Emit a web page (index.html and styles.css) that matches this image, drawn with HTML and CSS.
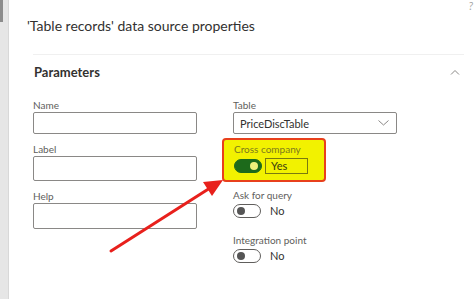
FILE: index.html
```html
<!DOCTYPE html>
<html>
<head>
<meta charset="utf-8">
<link rel="stylesheet" href="styles.css">
</head>
<body>
<div class="page">
  <div class="strip"><div class="strip-top"></div></div>
  <div class="panel">
    <div class="help-mark">?</div>
    <h1 class="title">'Table records' data source properties</h1>
    <div class="divider"></div>
    <div class="section-head">
      <span class="section-title">Parameters</span>
      <svg class="collapse" width="10" height="6" viewBox="0 0 10 6"><path d="M1 5.5 L5 1.5 L9 5.5" fill="none" stroke="#8a8886" stroke-width="1"/></svg>
    </div>
    <div class="grid">
      <div class="col">
        <div class="field">
          <label class="lbl">Name</label>
          <div class="input"></div>
        </div>
        <div class="field gap">
          <label class="lbl">Label</label>
          <div class="input tall"></div>
        </div>
        <div class="field gap">
          <label class="lbl">Help</label>
          <div class="input tall2"></div>
        </div>
      </div>
      <div class="col">
        <div class="field">
          <label class="lbl">Table</label>
          <div class="input select">
            <span class="val">PriceDiscTable</span>
            <svg width="11" height="6" viewBox="0 0 11 6"><path d="M0.5 0.5 L5.5 5 L10.5 0.5" fill="none" stroke="#8a8886" stroke-width="1"/></svg>
          </div>
        </div>
        <div class="field hl">
          <label class="lbl hl-lbl">Cross company</label>
          <div class="toggle-row">
            <span class="toggle on"><span class="knob"></span></span>
            <span class="yes">Yes</span>
          </div>
        </div>
        <div class="field tog">
          <label class="lbl">Ask for query</label>
          <div class="toggle-row">
            <span class="toggle"><span class="knob"></span></span>
            <span class="no">No</span>
          </div>
        </div>
        <div class="field tog tog2">
          <label class="lbl">Integration point</label>
          <div class="toggle-row">
            <span class="toggle"><span class="knob"></span></span>
            <span class="no">No</span>
          </div>
        </div>
      </div>
    </div>
  </div>
  <svg class="arrow" width="474" height="299" viewBox="0 0 474 299">
    <line x1="111" y1="251" x2="210" y2="188" stroke="#e8201c" stroke-width="3" stroke-linecap="round"/>
    <polygon points="223,180 203,182 212,196" fill="#e8201c"/>
  </svg>
</div>
</body>
</html>
```
FILE: styles.css
```css
* { box-sizing: border-box; }
html, body { margin: 0; padding: 0; background: #fff; }
body { font-family: Lato, "Segoe UI", "Noto Sans", sans-serif; color: #323130; }
.page { position: relative; width: 474px; height: 299px; display: flex; overflow: hidden; }
.strip { width: 9px; background: #e6e6e6; border-right: 1px solid #d8d8d8; flex: none; }
.strip-top { width: 3px; height: 22px; background: #8c8c8c; }
.panel { position: relative; flex: 1; padding: 16px 0 0 18px; }
.help-mark { position: absolute; right: 1px; top: 0; font-size: 11px; line-height: 12px; color: #a8a8a8; font-style: italic; }
.title { margin: 0; font-size: 14px; font-weight: 400; line-height: 20px; color: #323130; }
.divider { margin: 18px 0 0 6px; width: 431px; height: 1px; background: #f0f0f0; }
.section-head { display: flex; align-items: center; justify-content: space-between; width: 427px; margin: 9px 0 0 7px; height: 16px; }
.section-title { font-size: 13px; font-weight: 700; color: #323130; }
.collapse { margin-right: 1px; }
.grid { display: grid; grid-template-columns: 164px 164px; column-gap: 36px; margin: 19px 0 0 6px; }
.col { display: flex; flex-direction: column; }
.field { display: flex; flex-direction: column; }
.lbl { font-size: 10px; line-height: 12px; color: #605e5c; height: 13px; }
.input { height: 22px; border: 1px solid #8a8886; border-radius: 2px; background: #fff; }
.input.tall { height: 25px; }
.input.tall2 { height: 26px; }
.gap { margin-top: 9px; }
.select { display: flex; align-items: center; justify-content: space-between; padding: 0 7px 0 6px; }
.val { font-size: 11px; color: #323130; }
.hl { margin: 4px 0 0 -11px; width: 104px; height: 44px; background: #f2f200; border: 2px solid #e8401c; border-radius: 4px; padding: 3px 0 0 10px; }
.hl-lbl { color: #7d7a1e; }
.toggle-row { display: flex; align-items: center; height: 17px; }
.hl .toggle-row { margin-top: 1px; }
.toggle { position: relative; width: 28px; height: 14px; border-radius: 7px; border: 1px solid #605e5c; background: #fff; flex: none; }
.toggle .knob { position: absolute; top: 2px; left: 3px; width: 8px; height: 8px; border-radius: 50%; background: #555; }
.toggle.on { background: #1d6a1b; border-color: #1d6a1b; }
.toggle.on .knob { left: auto; right: 3px; background: #eef07a; }
.yes { margin-left: 3px; width: 43px; height: 16px; border: 1px solid #7a7a10; font-size: 11px; line-height: 14px; padding-left: 5px; color: #3a3a10; }
.no { margin-left: 9px; font-size: 11px; color: #323130; }
.tog { margin-top: 7px; }
.tog2 { margin-top: 15px; }
.arrow { position: absolute; left: 0; top: 0; pointer-events: none; }
```
